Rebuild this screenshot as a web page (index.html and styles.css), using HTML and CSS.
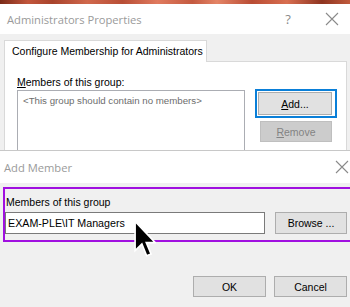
FILE: index.html
```html
<!DOCTYPE html>
<html>
<head>
<meta charset="utf-8">
<link rel="stylesheet" href="styles.css">
</head>
<body>
<div class="screen">
  <div class="desktop"></div>
  <div class="win win1">
    <div class="titlebar">
      <span class="title">Administrators Properties</span>
      <span class="help">?</span>
      <span class="close">
        <svg width="14" height="14" viewBox="0 0 14 14"><path d="M1 1 L13 13 M13 1 L1 13" stroke="#8a8a8a" stroke-width="1.1" fill="none"/></svg>
      </span>
    </div>
    <div class="body1">
      <div class="tabs"><div class="tab">Configure Membership for Administrators</div></div>
      <div class="panel">
        <div class="label1"><u>M</u>embers of this group:</div>
        <div class="row1">
          <div class="listbox">&lt;This group should contain no members&gt;</div>
          <div class="btncol">
            <div class="focus"><div class="btn add"><u>A</u>dd...</div></div>
            <div class="btn remove"><u>R</u>emove</div>
          </div>
        </div>
      </div>
    </div>
  </div>
  <div class="win win2">
    <div class="titlebar t2">
      <span class="title">Add Member</span>
      <span class="close">
        <svg width="14" height="14" viewBox="0 0 14 14"><path d="M1 1 L13 13 M13 1 L1 13" stroke="#8a8a8a" stroke-width="1.1" fill="none"/></svg>
      </span>
    </div>
    <div class="body2">
      <div class="mark">
        <div class="label2">Members of this group</div>
        <div class="row2">
          <div class="input">EXAM-PLE\IT Managers</div>
          <div class="btn browse">Browse ...</div>
        </div>
      </div>
      <div class="actions">
        <div class="btn ok">OK</div>
        <div class="btn cancel">Cancel</div>
      </div>
    </div>
  </div>
  <svg class="cursor" width="22" height="38" viewBox="0 0 12 20.5">
    <polygon points="0.6,0.6 0.6,16.6 4.3,13 6.9,19.4 9.3,18.4 6.7,12.2 11.6,12.2" fill="#000" stroke="#fff" stroke-width="0.9" stroke-linejoin="miter"/>
  </svg>
</div>
</body>
</html>
```

FILE: styles.css
```css
* { box-sizing: border-box; }
html, body { margin: 0; padding: 0; }
body {
  font-family: "Liberation Sans", Arial, sans-serif;
  font-size: 10.5px;
  color: #000;
  background: #f0f0f0;
}
.screen {
  position: relative;
  width: 350px;
  height: 307px;
  overflow: hidden;
  background: #f0f0f0;
}
.desktop {
  height: 4px;
  background: linear-gradient(90deg, #7a2a18 0%, #c2563c 8%, #a8432c 15%, #d0684c 25%, #b84e36 35%, #e07a5e 45%, #c45a40 55%, #e48466 62%, #b94c34 72%, #d86e50 82%, #8e3420 92%, #c05a3c 100%);
}
.win { background: #f0f0f0; }
.win1 { height: 146px; overflow: hidden; }
.titlebar {
  height: 30px;
  background: #fff;
  display: flex;
  align-items: center;
  position: relative;
}
.title {
  font-family: "Open Sans", "Noto Sans", sans-serif;
  font-size: 11.2px;
  color: #9a9a9a;
  padding-left: 7px;
  flex: 1;
}
.help {
  font-family: "Open Sans", sans-serif;
  font-size: 13px;
  color: #8a8a8a;
  width: 20px;
  margin-right: 27px;
  text-align: center;
}
.close {
  width: 14px;
  height: 14px;
  margin-right: 11px;
  display: flex;
}
.body1 { padding: 6px 3px 0 4px; }
.tabs { display: flex; }
.tab {
  height: 22px;
  width: 203px;
  background: #fff;
  border: 1px solid #d9d9d9;
  border-bottom: none;
  padding: 4px 0 0 7px;
  position: relative;
  z-index: 1;
  margin-bottom: -1px;
  white-space: nowrap;
}
.panel {
  background: #fff;
  border: 1px solid #d9d9d9;
  height: 120px;
  padding: 13px 0 0 12px;
}
.label1 { color: #000; height: 14px; line-height: 14px; }
.row1 { display: flex; margin-top: 0; }
.listbox {
  width: 228px;
  height: 70px;
  margin-top: 1px;
  border: 1px solid #abadb3;
  color: #6d6d6d;
  font-size: 9.7px;
  padding: 4px 0 0 5px;
  white-space: nowrap;
}
.btncol {
  margin-left: 10px;
  display: flex;
  flex-direction: column;
}
.focus {
  width: 82px;
  height: 29px;
  border: 2px solid #0a7fd8;
  padding: 1px;
}
.btn {
  display: flex;
  align-items: center;
  justify-content: center;
  background: #e1e1e1;
  border: 1px solid #adadad;
  white-space: nowrap;
}
.add { width: 74px; height: 23px; }
.remove {
  width: 72px;
  height: 21px;
  margin: 3px 0 0 5px;
  background: #cccccc;
  border-color: #bfbfbf;
  color: #838383;
}
.win2 { border-top: 1px solid #c8c8c8; }
.t2 { height: 32px; }
.t2 .close { width: 14px; margin-right: 1px; }
.t2 .title { padding-left: 4px; }
.body2 { padding: 4px 0 0 3px; }
.mark {
  width: 349px;
  height: 55px;
  border: 2px solid #a010e0;
  padding: 6px 0 0 0;
}
.label2 { padding-left: 1px; height: 14px; line-height: 14px; }
.row2 { display: flex; margin-top: 3px; }
.input {
  width: 260px;
  height: 22px;
  border: 1px solid #7a7a7a;
  background: #fff;
  padding: 4px 0 0 2px;
  font-size: 10.7px;
  white-space: nowrap;
}
.browse { width: 72px; height: 22px; margin-left: 10px; }
.actions {
  display: flex;
  justify-content: flex-end;
  gap: 8px;
  margin-top: 34px;
  width: 344px;
}
.ok, .cancel { width: 73px; height: 21px; }
.cursor {
  position: absolute;
  left: 134px;
  top: 220px;
}
```
